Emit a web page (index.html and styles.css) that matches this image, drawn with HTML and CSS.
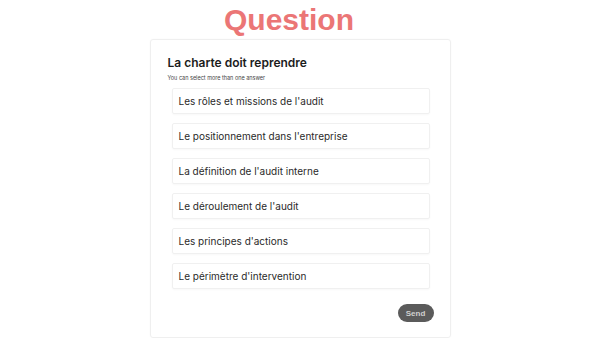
FILE: index.html
```html
<!DOCTYPE html>
<html lang="fr">
<head>
<meta charset="utf-8">
<link rel="stylesheet" href="styles.css">
</head>
<body>
<div class="page">
  <h1 class="heading">Question</h1>
  <div class="card">
    <h2 class="q-title">La charte doit reprendre</h2>
    <p class="q-hint">You can select more than one answer</p>
    <div class="options">
      <div class="option">Les rôles et missions de l'audit</div>
      <div class="option">Le positionnement dans l'entreprise</div>
      <div class="option">La définition de l'audit interne</div>
      <div class="option">Le déroulement de l'audit</div>
      <div class="option">Les principes d'actions</div>
      <div class="option">Le périmètre d'intervention</div>
    </div>
    <div class="actions">
      <button class="send">Send</button>
    </div>
  </div>
</div>
</body>
</html>
```
FILE: styles.css
```css
html, body {
  margin: 0;
  padding: 0;
  background: #ffffff;
}
body {
  width: 600px;
  height: 338px;
  overflow: hidden;
  font-family: Inter, "Liberation Sans", sans-serif;
}
.page {
  display: flex;
  flex-direction: column;
  align-items: center;
}
.heading {
  margin: 0 22px 0 0;
  height: 39px;
  line-height: 40px;
  font-family: "Liberation Sans", Arial, sans-serif;
  font-weight: 700;
  font-size: 30px;
  color: #eb7676;
}
.card {
  box-sizing: border-box;
  width: 301px;
  height: 299px;
  border: 1px solid #efefef;
  border-radius: 3px;
  padding: 14px 20px 0 17px;
  box-shadow: 0 0 2px rgba(0,0,0,0.03);
}
.q-title {
  margin: 0;
  font-size: 12px;
  line-height: 18px;
  font-weight: 600;
  color: #1c1c1c;
}
.q-hint {
  margin: 2px 0 0 0;
  font-size: 5.5px;
  line-height: 8px;
  color: #444;
}
.options {
  margin: 6px 0 0 4px;
  display: flex;
  flex-direction: column;
  gap: 9px;
}
.option {
  box-sizing: border-box;
  height: 26px;
  border: 1px solid #f0f0f0;
  border-radius: 2px;
  padding: 0 6px;
  display: flex;
  align-items: center;
  font-size: 10px;
  color: #2a2a2a;
  box-shadow: 0 1px 2px rgba(0,0,0,0.03);
}
.actions {
  display: flex;
  justify-content: flex-end;
  margin: 15px -4px 0 0;
}
.send {
  width: 36px;
  height: 18px;
  border: none;
  border-radius: 9px;
  background: #5b5b5b;
  color: #d0d0d0;
  font-family: "Liberation Sans", Arial, sans-serif;
  font-size: 8px;
  font-weight: 700;
  padding: 0;
}
```
